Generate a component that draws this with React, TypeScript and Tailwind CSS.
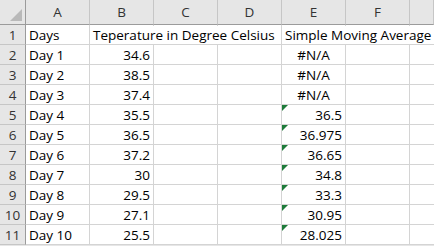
import React from "react";

const cols = ["A", "B", "C", "D", "E", "F", ""];
const rows: [string, string, string, boolean][] = [
  ["Days", "Teperature in Degree Celsius", "Simple Moving Average", false],
  ["Day 1", "34.6", "#N/A", false],
  ["Day 2", "38.5", "#N/A", false],
  ["Day 3", "37.4", "#N/A", false],
  ["Day 4", "35.5", "36.5", true],
  ["Day 5", "36.5", "36.975", true],
  ["Day 6", "37.2", "36.65", true],
  ["Day 7", "30", "34.8", true],
  ["Day 8", "29.5", "33.3", true],
  ["Day 9", "27.1", "30.95", true],
  ["Day 10", "25.5", "28.025", true],
];

export default function App() {
  const font = { fontFamily: "'Open Sans', 'Liberation Sans', sans-serif" };
  return (
    <div className="w-[434px] h-[246px] overflow-hidden bg-[#e6e6e6] text-[13.5px]" style={font}>
      <div className="grid grid-cols-[26px_64px_64px_64px_64px_64px_64px_24px]">
        <div className="relative h-[25px] bg-[#e6e6e6] border-r border-b border-[#9b9b9b]">
          <div className="absolute right-[3px] bottom-[3px] w-0 h-0 border-l-[12px] border-l-transparent border-b-[12px] border-b-[#b9b9b9]" />
        </div>
        {cols.map((c, i) => (
          <div
            key={i}
            className="h-[25px] bg-[#e6e6e6] border-r border-b border-r-[#c6c6c6] border-b-[#9b9b9b] flex items-end justify-center pb-[2px] text-[#333]"
          >
            {c}
          </div>
        ))}
        {rows.map((r, ri) => (
          <React.Fragment key={ri}>
            <div className="h-[20px] bg-[#e6e6e6] border-r border-b border-r-[#9b9b9b] border-b-[#c6c6c6] flex items-end justify-center text-[#333] leading-[18px]">
              {ri + 1}
            </div>
            <div className="relative h-[20px] bg-white border-r border-b border-[#d4d4d4] leading-[18px] flex items-end pl-[3px] text-black whitespace-nowrap">
              {r[0]}
            </div>
            <div
              className={`relative h-[20px] bg-white border-r border-b border-[#d4d4d4] leading-[18px] flex items-end text-black whitespace-nowrap ${
                ri === 0 ? "pl-[3px] z-10 overflow-visible" : "justify-end pr-[3px]"
              }`}
            >
              {ri === 0 ? <span className="absolute left-[3px] bottom-0 bg-white pr-[2px]">{r[1]}</span> : r[1]}
            </div>
            <div className="h-[20px] bg-white border-r border-b border-[#d4d4d4]" />
            <div className="h-[20px] bg-white border-r border-b border-[#d4d4d4]" />
            <div
              className={`relative h-[20px] bg-white border-r border-b border-[#d4d4d4] leading-[18px] flex items-end text-black whitespace-nowrap ${
                ri === 0 ? "" : r[2].startsWith("#") ? "justify-center" : "justify-end pr-[3px]"
              }`}
            >
              {ri === 0 ? (
                <span className="absolute left-[3px] bottom-0 bg-white z-10">{r[2]}</span>
              ) : (
                r[2]
              )}
              {r[3] && (
                <div className="absolute left-0 top-0 w-0 h-0 border-t-[6px] border-t-[#1e7b3a] border-r-[6px] border-r-transparent" />
              )}
            </div>
            <div className="h-[20px] bg-white border-r border-b border-[#d4d4d4]" />
            <div className="h-[20px] bg-white border-b border-[#d4d4d4]" />
          </React.Fragment>
        ))}
      </div>
    </div>
  );
}
